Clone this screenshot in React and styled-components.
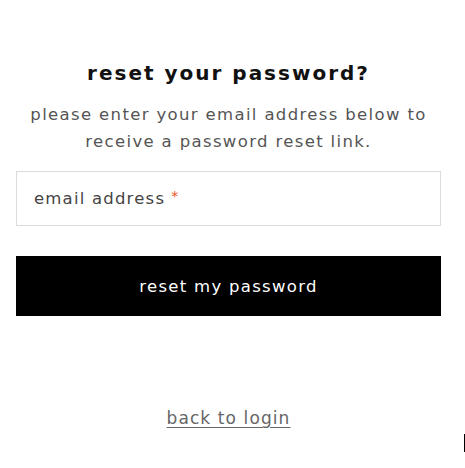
import React from "react";
import styled, { createGlobalStyle } from "styled-components";

const Global = createGlobalStyle`
  html, body { margin: 0; padding: 0; background: #fff; }
  body { font-family: "DejaVu Sans", "Liberation Sans", sans-serif; }
`;

const Page = styled.div`
  position: relative;
  width: 465px;
  height: 468px;
  box-sizing: border-box;
  padding: 58px 24px 0 16px;
  display: flex;
  flex-direction: column;
  overflow: hidden;
`;

const Title = styled.h1`
  margin: 0;
  text-align: center;
  font-size: 20px;
  font-weight: 700;
  color: #111;
  line-height: 30px;
  letter-spacing: 2px;
`;

const Subtitle = styled.p`
  margin: 13px 0 0;
  text-align: center;
  font-size: 16.5px;
  color: #555;
  line-height: 27px;
  letter-spacing: 1.35px;
`;

const Field = styled.div`
  margin-top: 16px;
  height: 55px;
  border: 1px solid #dcdcdc;
  box-sizing: border-box;
  display: flex;
  align-items: center;
  padding: 0 17px;
  font-size: 16.5px;
  color: #444;
  letter-spacing: 1.2px;
`;

const Required = styled.span`
  color: #f5511e;
  margin-left: 6px;
  font-size: 14px;
  align-self: flex-start;
  margin-top: 16px;
`;

const Button = styled.button`
  margin-top: 30px;
  height: 60px;
  border: none;
  background: #000;
  color: #fff;
  font-family: inherit;
  font-size: 16.5px;
  letter-spacing: 1.3px;
  cursor: pointer;
`;

const LinkRow = styled.div`
  margin-top: 92px;
  text-align: center;
`;

const BackLink = styled.a`
  font-size: 17px;
  color: #666;
  text-decoration: underline;
  text-underline-offset: 3px;
  letter-spacing: 1.1px;
`;

const Caret = styled.div`
  position: absolute;
  right: 0;
  top: 434px;
  width: 1px;
  height: 18px;
  background: #000;
`;

export default function App() {
  return (
    <>
      <Global />
      <Page>
        <Title>reset your password?</Title>
        <Subtitle>
          please enter your email address below to
          <br />
          receive a password reset link.
        </Subtitle>
        <Field>
          email address<Required>*</Required>
        </Field>
        <Button>reset my password</Button>
        <LinkRow>
          <BackLink href="#">back to login</BackLink>
        </LinkRow>
        <Caret />
      </Page>
    </>
  );
}
